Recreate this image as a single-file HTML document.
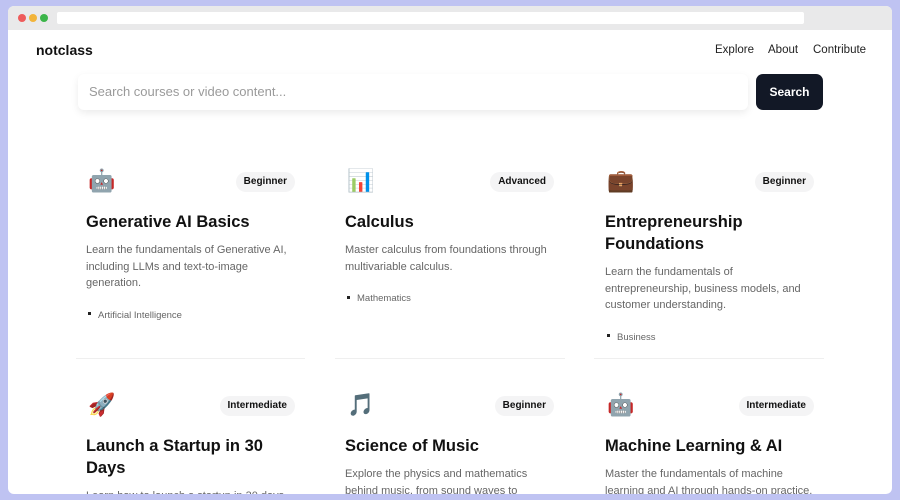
<!DOCTYPE html>
<html><head><meta charset="utf-8"><style>
*{margin:0;padding:0;box-sizing:border-box}
body{width:900px;height:500px;overflow:hidden;background:#bfc3f2;font-family:"Liberation Sans",sans-serif;position:relative}
.win{position:absolute;left:8px;top:6px;width:884px;height:488px;background:#fff;border-radius:6px;overflow:hidden}
.bar{height:24px;background:#e9e9ea;position:relative}
.dot{position:absolute;top:8px;width:8px;height:8px;border-radius:50%}
.url{position:absolute;left:49px;top:6px;width:747px;height:12px;background:#fff;border-radius:2px}
.logo{position:absolute;left:28px;top:36px;font-size:14px;font-weight:bold;color:#111}
.nav{position:absolute;top:38px;font-size:11.5px;color:#222}
.search{position:absolute;left:70px;top:68px;width:670px;height:36px;border-radius:6px;box-shadow:0 3px 8px rgba(0,0,0,.08);background:#fff;font-size:13px;color:#9a9a9a;padding:10px 11px}
.btn{position:absolute;left:748px;top:68px;width:67px;height:36px;background:#121826;border-radius:7px;color:#fff;font-size:12px;font-weight:bold;text-align:center;line-height:36px}
.card{position:absolute;width:230px}
.icon{position:absolute;left:12px;top:0;font-size:22px;line-height:26px}
.badge{position:absolute;right:11px;top:4px;height:20px;line-height:20px;padding:0 8px;background:#f4f4f5;border-radius:10px;font-size:10px;font-weight:bold;color:#111}
.t{position:absolute;left:10px;top:43px;width:200px;font-size:16.5px;line-height:22px;font-weight:bold;color:#111}
.d{margin-top:9px;font-size:11px;line-height:16.5px;color:#666;font-weight:normal;width:212px}
.tag{margin-top:13px;font-size:9.5px;color:#666;font-weight:normal}
.tag:before{content:"";display:inline-block;width:3px;height:3px;background:#222;margin:0 7px 2px 2px;vertical-align:middle}
.hr{position:absolute;height:1px;background:#efefef;top:352px}
</style></head><body>
<div class="win">
<div class="bar"><span class="dot" style="left:10px;background:#ee5b5b"></span><span class="dot" style="left:21px;background:#f2b43a"></span><span class="dot" style="left:32px;background:#3cb54a"></span><div class="url"></div></div>
<div class="logo">notclass</div>
<div class="nav" style="left:707px">Explore</div>
<div class="nav" style="left:760px">About</div>
<div class="nav" style="left:805px">Contribute</div>
<div class="search">Search courses or video content...</div>
<div class="btn">Search</div>

<div class="card" style="left:68px;top:162px"><div class="icon">🤖</div><div class="badge">Beginner</div><div class="t">Generative AI Basics<div class="d" style="width:208px">Learn the fundamentals of Generative AI, including LLMs and text-to-image generation.</div><div class="tag">Artificial Intelligence</div></div></div>
<div class="card" style="left:327px;top:162px"><div class="icon">📊</div><div class="badge">Advanced</div><div class="t">Calculus<div class="d">Master calculus from foundations through multivariable calculus.</div><div class="tag">Mathematics</div></div></div>
<div class="card" style="left:587px;top:162px"><div class="icon">💼</div><div class="badge">Beginner</div><div class="t">Entrepreneurship Foundations<div class="d" style="width:205px">Learn the fundamentals of entrepreneurship, business models, and customer understanding.</div><div class="tag">Business</div></div></div>

<div class="hr" style="left:68px;width:229px"></div>
<div class="hr" style="left:327px;width:230px"></div>
<div class="hr" style="left:586px;width:230px"></div>

<div class="card" style="left:68px;top:386px"><div class="icon">🚀</div><div class="badge">Intermediate</div><div class="t">Launch a Startup in 30 Days<div class="d">Learn how to launch a startup in 30 days.</div></div></div>
<div class="card" style="left:327px;top:386px"><div class="icon">🎵</div><div class="badge">Beginner</div><div class="t">Science of Music<div class="d" style="width:200px">Explore the physics and mathematics behind music, from sound waves to harmony.</div></div></div>
<div class="card" style="left:587px;top:386px"><div class="icon">🤖</div><div class="badge">Intermediate</div><div class="t">Machine Learning &amp; AI<div class="d" style="width:218px">Master the fundamentals of machine learning and AI through hands-on practice.</div></div></div>
</div>
</body></html>
